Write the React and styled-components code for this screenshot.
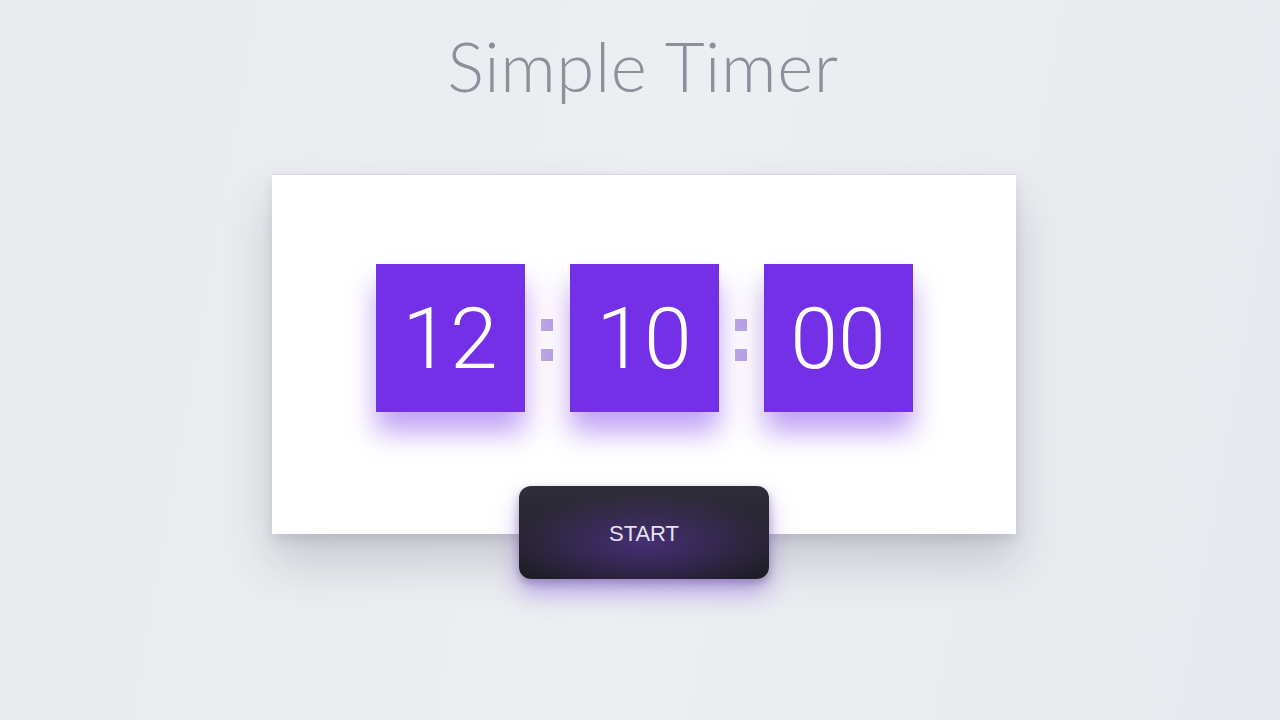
import React from 'react'
import styled, { createGlobalStyle } from 'styled-components'

const GlobalStyle = createGlobalStyle`
  html, body {
    margin: 0;
    padding: 0;
    height: 100%;
  }
  body {
    background: linear-gradient(100deg, #e8eaee 0%, #eceef2 50%, #e7e9ee 100%);
    font-family: "Liberation Sans", Arial, sans-serif;
  }
`;

const Page = styled.div`
  width: 1280px;
  height: 720px;
  display: flex;
  flex-direction: column;
  align-items: center;
  overflow: hidden;
`;

const Title = styled.h1`
  margin: 26px 0 0 6px;
  font-family: "Lato", "Open Sans", sans-serif;
  font-weight: 300;
  font-size: 69px;
  line-height: 80px;
  letter-spacing: 0.6px;
  color: #8c909b;
`;

const Stage = styled.div`
  margin: 68px 0 0 8px;
  display: flex;
  flex-direction: column;
  align-items: center;
`;

const Card = styled.div`
  width: 744px;
  height: 360px;
  box-sizing: border-box;
  padding-top: 89px;
  background: #fff;
  border-top: 1px solid #d9d3ef;
  box-shadow: 0 28px 44px rgba(60, 62, 80, 0.2), 0 6px 10px rgba(60, 62, 80, 0.12);
  display: flex;
  flex-direction: column;
  align-items: center;
`;

const Clock = styled.div`
  display: flex;
  align-items: center;
`;

const Digits = styled.div`
  width: 149px;
  height: 148px;
  background: #7430e6;
  color: #fff;
  display: flex;
  align-items: center;
  justify-content: center;
  font-family: "Roboto", "Liberation Sans", sans-serif;
  font-size: 86px;
  font-weight: 300;
  box-shadow: 0 20px 26px rgba(116, 48, 230, 0.45);
`;

const Colon = styled.div`
  width: 45px;
  display: flex;
  flex-direction: column;
  align-items: center;
  gap: 18px;
  padding-top: 4px;

  span {
    display: block;
    width: 12px;
    height: 12px;
    background: #b9a5e4;
  }
`;

const StartButton = styled.button`
  margin-top: -48px;
  width: 250px;
  height: 93px;
  border: none;
  border-radius: 12px;
  background:
    radial-gradient(ellipse 55% 55% at 50% 62%, rgba(80, 50, 140, 0.75), rgba(40, 34, 60, 0) 100%),
    linear-gradient(180deg, #2f2d38 0%, #1f1d27 100%);
  color: #e6e2f0;
  font-family: "Liberation Sans", Arial, sans-serif;
  font-size: 22px;
  padding-top: 4px;
  box-shadow: 0 14px 24px rgba(128, 82, 220, 0.45), 0 4px 8px rgba(30, 28, 40, 0.3);
  position: relative;
  z-index: 1;
`;

function App() {
  const parts = ['12', '10', '00'];

  return (
    <Page>
      <GlobalStyle />
      <Title>Simple Timer</Title>
      <Stage>
        <Card>
          <Clock>
            {parts.map((p, i) => (
              <React.Fragment key={i}>
                {i > 0 && (
                  <Colon>
                    <span />
                    <span />
                  </Colon>
                )}
                <Digits>{p}</Digits>
              </React.Fragment>
            ))}
          </Clock>
        </Card>
        <StartButton>START</StartButton>
      </Stage>
    </Page>
  );
}

export default App;
